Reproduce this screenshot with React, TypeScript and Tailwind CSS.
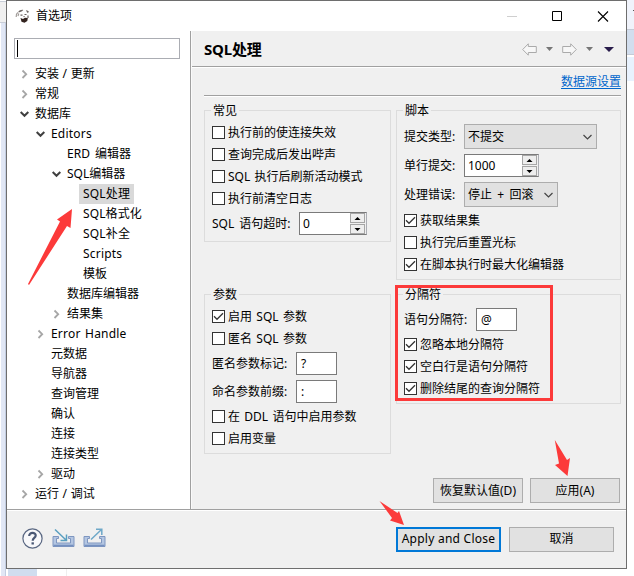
import React from "react";

type NodeRow = { label: string; level: number; state?: "open" | "closed"; selected?: boolean; spacing?: string };

const rows: NodeRow[] = [
  { label: "安装 / 更新", level: 0, state: "closed", spacing: "[word-spacing:0.5px]" },
  { label: "常规", level: 0, state: "closed" },
  { label: "数据库", level: 0, state: "open" },
  { label: "Editors", level: 1, state: "open", spacing: "tracking-[0.2px]" },
  { label: "ERD 编辑器", level: 2, spacing: "[word-spacing:2px]" },
  { label: "SQL编辑器", level: 2, state: "open" },
  { label: "SQL处理", level: 3, selected: true, spacing: "tracking-[0.2px]" },
  { label: "SQL格式化", level: 3, spacing: "tracking-[0.1px]" },
  { label: "SQL补全", level: 3, spacing: "tracking-[0.2px]" },
  { label: "Scripts", level: 3, spacing: "tracking-[0.2px]" },
  { label: "模板", level: 3 },
  { label: "数据库编辑器", level: 2 },
  { label: "结果集", level: 2, state: "closed" },
  { label: "Error Handle", level: 1, state: "closed", spacing: "tracking-[0.2px]" },
  { label: "元数据", level: 1 },
  { label: "导航器", level: 1 },
  { label: "查询管理", level: 1 },
  { label: "确认", level: 1 },
  { label: "连接", level: 1 },
  { label: "连接类型", level: 1 },
  { label: "驱动", level: 1, state: "closed" },
  { label: "运行 / 调试", level: 0, state: "closed", spacing: "[word-spacing:0.5px]" },
];

const indents = ["pl-[10px]", "pl-[26px]", "pl-[42px]", "pl-[58px]"];

function Expander({ state }: { state?: "open" | "closed" }) {
  return (
    <svg className="h-4 w-[14px] shrink-0" viewBox="0 0 14 16" fill="none" strokeWidth="2">
      {state === "closed" && <path d="M5.5 4.5 L9.2 8.2 L5.5 12" stroke="#a6a6a6" strokeWidth="1.8" />}
      {state === "open" && <path d="M3.7 6 L7.5 9.8 L11.3 6" stroke="#404040" />}
    </svg>
  );
}

function Tree() {
  return (
    <div className="mt-[5px] flex flex-col">
      {rows.map((r) => (
        <div key={r.label} className={`flex h-5 items-center ${indents[r.level]}`}>
          <Expander state={r.state} />
          <span className={`flex h-5 items-center whitespace-nowrap px-1 ${r.spacing ?? ""} ${r.selected ? "bg-[#d9d9d9]" : ""}`}>
            {r.label}
          </span>
        </div>
      ))}
    </div>
  );
}

function Check({ label, checked }: { label: string; checked?: boolean }) {
  return (
    <div className="flex h-[22px] items-center gap-[3px] whitespace-nowrap">
      <span className="mb-px flex size-[13px] shrink-0 items-center justify-center border border-[#333] bg-white">
        {checked && (
          <svg className="size-[11px] shrink-0" viewBox="0 0 11 11" fill="none">
            <path d="M1 5.3 L4 8.3 L10 2.2" stroke="#333" strokeWidth="1.3" />
          </svg>
        )}
      </span>
      <span>{label}</span>
    </div>
  );
}

function Group({ title, className, children }: { title: string; className: string; children: React.ReactNode }) {
  return (
    <div className={`flex flex-col border border-[#dcdcdc] px-[7px] ${className}`}>
      <div className="-mt-2 flex h-4 items-center">
        <span className="-ml-px bg-[#f0f0f0] px-0.5">{title}</span>
      </div>
      {children}
    </div>
  );
}

function Spinner({ value, className }: { value: string; className: string }) {
  return (
    <div className={`flex h-[23px] items-stretch border border-[#7a7a7a] border-r-[#abadb3] bg-white ${className}`}>
      <span className="flex grow items-center pl-[3px]">{value}</span>
      <span className="flex w-[16px] flex-col gap-px bg-[#f0f0f0] pr-px">
        {["M3.5 6 L6.5 3 L9.5 6Z", "M3.5 3 L6.5 6 L9.5 3Z"].map((d) => (
          <span key={d} className="flex h-[10px] items-center justify-center border border-[#a6a6a6] bg-[#eee]">
            <svg className="h-[9px] w-[13px] shrink-0" viewBox="0 0 13 9"><path d={d} fill="#000" /></svg>
          </span>
        ))}
      </span>
    </div>
  );
}

function Select({ value, className }: { value: string; className: string }) {
  return (
    <div className={`flex h-[25px] items-center justify-between border border-[#adadad] bg-[#e1e1e1] pl-[3px] pr-1 whitespace-nowrap ${className}`}>
      <span>{value}</span>
      <svg className="h-2 w-[9px]" viewBox="0 0 9 8" fill="none"><path d="M0.5 2 L4.5 6 L8.5 2" stroke="#444" strokeWidth="1.2" /></svg>
    </div>
  );
}

function Field({ label, labelWidth, children, className = "" }: { label: string; labelWidth: string; children: React.ReactNode; className?: string }) {
  return (
    <div className={`flex items-center ${className}`}>
      <span className={`shrink-0 whitespace-nowrap ${labelWidth}`}>{label}</span>
      {children}
    </div>
  );
}

function Input({ value }: { value: string }) {
  return <span className="flex h-[23px] w-[41px] items-center border border-[#7a7a7a] bg-white pl-[4px]">{value}</span>;
}

function Button({ label, className }: { label: string; className: string }) {
  return (
    <button className={`flex h-[25px] items-center justify-center whitespace-nowrap bg-[#e1e1e1] ${className}`}>
      {label}
    </button>
  );
}

function Beaver() {
  return (
    <svg className="size-4" viewBox="0 0 16 16" fill="none">
      <path d="M1.2 9 C1 7 1.5 5.5 2.8 4.5 M3.8 5.5 L3 8" stroke="#a09b98" strokeWidth="1.2" />
      <path d="M3 4.2 C4.5 2.2 6 1.6 8.3 1.9 L7 3.2 L4.5 4.2Z M11 2 L13.8 3.2 L13 5.2 L11.8 4Z" fill="#6e6663" />
      <path d="M5.5 7.2 h2 M9.5 6.5 h2 M13 7.5 v2.5" stroke="#6b6260" strokeWidth="1.2" />
      <path d="M5.5 10 L8 11 L10 9.8 L12.8 10 L12.3 13 L9.5 14.8 L6.5 13.8Z" fill="#33231f" />
      <path d="M8.3 8.6 h1.6" stroke="#8a827f" />
    </svg>
  );
}

function NavArrow({ flip }: { flip?: boolean }) {
  return (
    <svg className={`h-[13px] w-[15px] ${flip ? "-scale-x-100" : ""}`} viewBox="0 0 15 13">
      <path d="M0.7 6.5 L6.3 0.8 V3.5 H14.3 V9.5 H6.3 V12.2Z" fill="#f7f7f7" stroke="#aaa" strokeLinejoin="round" />
    </svg>
  );
}

function Caret({ color, wide }: { color: string; wide?: boolean }) {
  return (
    <svg className={wide ? "h-[5px] w-[10px]" : "h-[4px] w-[7px]"} viewBox="0 0 10 5" preserveAspectRatio="none">
      <path d="M0 0 H10 L5 5Z" fill={color} />
    </svg>
  );
}

function Tray({ out }: { out?: boolean }) {
  return (
    <svg className="h-5 w-[23px]" viewBox="0 0 23 20" fill="none">
      <path d="M1 8.5 H6.5 V10.5 H4.5 V15 H18.5 V10.5 H16.5 V8.5 H22 V18.5 H1Z" fill="#b4c6e2" stroke="#7e96c0" />
      <path d="M1.5 17.5 H21.5" stroke="#7590c0" strokeWidth="1.6" />
      {out ? (
        <path d="M8 11.5 L18.5 1.5 M13 1.2 H18.8 V7" stroke="#6ea8c8" strokeWidth="1.5" />
      ) : (
        <path d="M3 1.5 L14 12 M14.5 6.5 V12.5 H8.5" stroke="#5a9fc0" strokeWidth="1.5" />
      )}
    </svg>
  );
}

export default function App() {
  return (
    <div className="relative flex h-[576px] w-[634px] overflow-hidden bg-white font-['Noto_Sans','Noto_Sans_CJK_SC',sans-serif] text-[12px] leading-4 text-black [word-spacing:1.2px]">
      {/* Strips of the workbench showing behind the dialog */}
      <div className="flex w-[6px] shrink-0 flex-col">
        <div className="h-px bg-white" />
        <div className="h-[22px] border-y border-[#c9ced8] bg-[#f0f0f0]" />
        <div className="ml-px grow border-r border-[#c3cde1] bg-[#e1e7f5]" />
      </div>

      <div className="flex w-[621px] shrink-0 flex-col">
        <div className="flex h-[569px] flex-col border border-[#6e6e6e] bg-[#f0f0f0]">
          <div className="flex h-[30px] shrink-0 items-center bg-white pl-2">
            <Beaver />
            <span className="ml-[5px] grow">首选项</span>
            <svg className="mr-[16px] h-[11px] w-[103px]" viewBox="0 0 103 11" fill="none">
              <path d="M0 5.5 H10" stroke="#cfcfcf" />
              <path d="M45.5 0.5 H54.5 V9.5 H45.5Z" stroke="#000" />
              <path d="M91 0.5 L101 10.5 M101 0.5 L91 10.5" stroke="#000" strokeWidth="1.1" />
            </svg>
          </div>

          <div className="flex h-[478px] shrink-0">
            <div className="flex w-[183px] shrink-0 flex-col bg-white pt-[7px]">
              <div className="ml-[7px] flex h-[21px] w-[166px] items-center border border-[#abadb3] bg-white pl-0.5">
                <span className="h-[17px] w-px bg-black" />
              </div>
              <Tree />
            </div>
            <div className="w-0.5 shrink-0 border-l border-[#a0a0a0] bg-[#fafafa]" />

            <div className="flex grow flex-col">
              <div className="flex h-[37px] shrink-0 items-center justify-between border-b border-white pl-3 pr-3 shadow-[inset_0_-1px_0_#a0a0a0]">
                <h1 className="text-[15px] font-bold tracking-[-0.2px]">SQL处理</h1>
                <div className="flex items-center gap-[9px]">
                  <NavArrow />
                  <Caret color="#777" />
                  <NavArrow flip />
                  <Caret color="#777" />
                  <span className="ml-0.5 flex"><Caret color="#291c4b" wide /></span>
                </div>
              </div>

              <div className="ml-3 mr-[5px] flex h-[29px] shrink-0 items-center justify-end border-b border-white shadow-[inset_0_-1px_0_#a0a0a0]">
                <a className="text-[#0066cc] underline underline-offset-2">数据源设置</a>
              </div>

              <div className="mt-[13px] grid shrink-0 grid-cols-[187px_225px] items-start gap-x-[5px] pl-3">
                <Group title="常见" className="h-[132px]">
                  <div className="mt-[3px]">
                    <Check label="执行前的使连接失效" />
                    <Check label="查询完成后发出哔声" />
                    <Check label="SQL 执行后刷新活动模式" />
                    <Check label="执行前清空日志" />
                  </div>
                  <Field label="SQL 语句超时:" labelWidth="w-[87px] [word-spacing:2px]" className="mt-[2px]">
                    <Spinner value="0" className="w-[68px]" />
                  </Field>
                </Group>
                <Group title="脚本" className="h-[170px]">
                  <Field label="提交类型:" labelWidth="w-[60px]" className="mt-[5px]">
                    <Select value="不提交" className="w-[133px]" />
                  </Field>
                  <Field label="单行提交:" labelWidth="w-[60px]" className="mt-[5px]">
                    <Spinner value="1000" className="w-[75px]" />
                  </Field>
                  <Field label="处理错误:" labelWidth="w-[60px]" className="mt-[5px]">
                    <Select value="停止 + 回滚" className="w-[94px] [word-spacing:2.2px]" />
                  </Field>
                  <div className="mt-[3px]">
                    <Check label="获取结果集" checked />
                    <Check label="执行完后重置光标" />
                    <Check label="在脚本执行时最大化编辑器" checked />
                  </div>
                </Group>
              </div>

              <div className="mt-[14px] grid shrink-0 grid-cols-[187px_225px] items-start gap-x-[5px] pl-3">
                <Group title="参数" className="h-[160px]">
                  <div className="mt-[3px]">
                    <Check label="启用 SQL 参数" checked />
                    <Check label="匿名 SQL 参数" />
                  </div>
                  <Field label="匿名参数标记:" labelWidth="w-[84px]" className="mt-[2px]"><Input value="?" /></Field>
                  <Field label="命名参数前缀:" labelWidth="w-[84px]" className="mt-[5px]"><Input value=":" /></Field>
                  <div className="mt-[3px]">
                    <Check label="在 DDL 语句中启用参数" />
                    <Check label="启用变量" />
                  </div>
                </Group>
                <Group title="分隔符" className="h-[110px]">
                  <Field label="语句分隔符:" labelWidth="w-[72px]" className="mt-[5px]"><Input value="@" /></Field>
                  <div className="mt-[3px]">
                    <Check label="忽略本地分隔符" checked />
                    <Check label="空白行是语句分隔符" checked />
                    <Check label="删除结尾的查询分隔符" checked />
                  </div>
                </Group>
              </div>

              <div className="mt-6 flex justify-end gap-[7px] pr-[6px]">
                <Button label="恢复默认值(D)" className="w-[90px] border border-[#adadad]" />
                <Button label="应用(A)" className="w-[90px] border border-[#adadad]" />
              </div>
            </div>
          </div>

          <div className="flex grow items-center border-t border-[#a0a0a0] pl-[15px] shadow-[inset_0_1px_0_#fff]">
            <div className="mb-[2px] flex grow items-center gap-2">
              <svg className="mr-px size-[21px]" viewBox="0 0 21 21" fill="none">
                <circle cx="10.5" cy="10.5" r="9.6" fill="#f8f8fa" stroke="#596782" strokeWidth="1.2" />
                <path d="M7.2 8 C7.2 3.8 14 4.2 13.7 7.7 C13.5 10 10.7 10 10.7 12.7" stroke="#4a5875" strokeWidth="2.2" />
                <path d="M9.5 14.3 h2.4 v2.2 h-2.4Z" fill="#4a5875" />
              </svg>
              <Tray />
              <Tray out />
            </div>
            <div className="flex gap-2 pr-3">
              <Button label="Apply and Close" className="w-[105px] border-2 border-[#0078d7] tracking-[0.25px]" />
              <Button label="取消" className="w-[105px] border border-[#adadad]" />
            </div>
          </div>
        </div>
        <div className="flex h-[7px]">
          <div className="ml-[2px] w-[29px] bg-[#d0ddef]" />
          <div className="ml-[29px] w-px bg-[#eee]" />
        </div>
      </div>

      <div className="flex grow flex-col">
        <div className="h-[29px] bg-[#f0f3fb]"><div className="ml-[6px] h-[11px] border-b border-[#555]" /></div>
        <div className="h-[26px] border-y border-[#c5cbd6] bg-[#d2deee]" />
        <div className="mt-[2px] h-6 bg-[#e8f2fe]" />
      </div>

      {/* Red annotations laid over the dialog */}
      <div className="absolute left-[395px] top-[285px] h-[116px] w-[158px] border-[3px] border-[#fc3a3a]" />
      <svg className="absolute inset-0 h-[576px] w-[634px]" viewBox="0 0 634 576" fill="#fc3a3a">
        <path d="M72 209 L70.5 228 L67 226 L29 285 L28 284 L60 221.5 L57 219.5Z" />
        <path d="M554.8 440 L567 460 L570 458 L567.5 476 L555 465 L559 463.5Z" />
        <path d="M379.5 501 L397.5 513 L399 511 L404 525 L390 520.5 L392 518Z" />
      </svg>
    </div>
  );
}
